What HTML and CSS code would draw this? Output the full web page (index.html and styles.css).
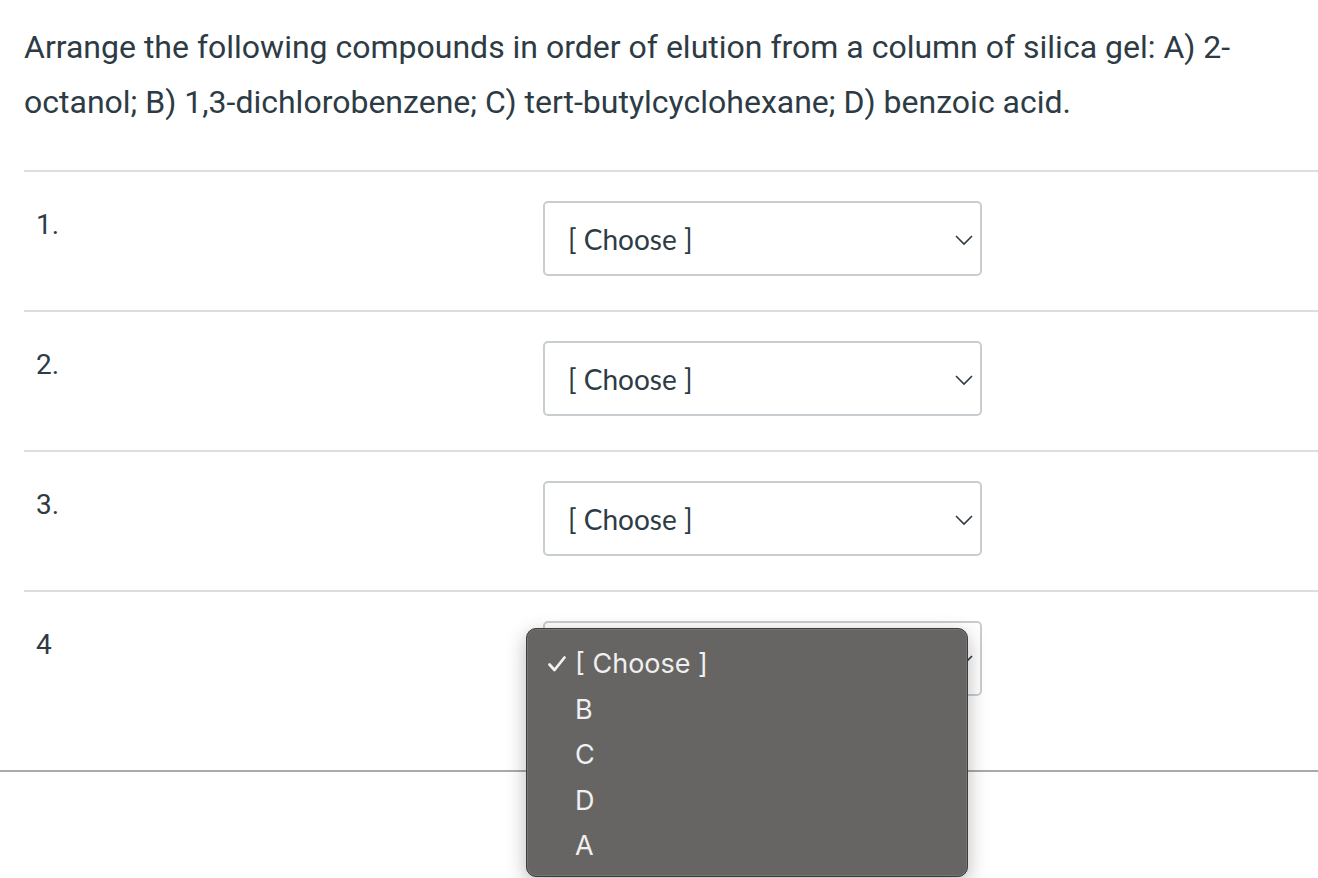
FILE: index.html
```html
<!DOCTYPE html>
<html>
<head>
<meta charset="utf-8">
<link rel="stylesheet" href="styles.css">
</head>
<body>
<div class="question">
  <p class="prompt">Arrange the following compounds in order of elution from a column of silica gel: A) 2-octanol; B) 1,3-dichlorobenzene; C) tert-butylcyclohexane; D) benzoic acid.</p>
</div>
<div class="answers">
  <div class="row">
    <div class="num">1.</div>
    <div class="select-wrap">
      <div class="select"><span>[ Choose ]</span>
        <svg class="chev" width="20" height="12" viewBox="0 0 20 12"><path d="M2 2 L10 10 L18 2" fill="none" stroke="#2d3b45" stroke-width="1.6"/></svg>
      </div>
    </div>
  </div>
  <div class="row">
    <div class="num">2.</div>
    <div class="select-wrap">
      <div class="select"><span>[ Choose ]</span>
        <svg class="chev" width="20" height="12" viewBox="0 0 20 12"><path d="M2 2 L10 10 L18 2" fill="none" stroke="#2d3b45" stroke-width="1.6"/></svg>
      </div>
    </div>
  </div>
  <div class="row">
    <div class="num">3.</div>
    <div class="select-wrap">
      <div class="select"><span>[ Choose ]</span>
        <svg class="chev" width="20" height="12" viewBox="0 0 20 12"><path d="M2 2 L10 10 L18 2" fill="none" stroke="#2d3b45" stroke-width="1.6"/></svg>
      </div>
    </div>
  </div>
  <div class="row last">
    <div class="num">4</div>
    <div class="select-wrap">
      <div class="select"><span>[ Choose ]</span>
        <svg class="chev" width="20" height="12" viewBox="0 0 20 12"><path d="M2 2 L10 10 L18 2" fill="none" stroke="#2d3b45" stroke-width="1.6"/></svg>
      </div>
      <div class="menu">
        <div class="item"><span class="check"><svg width="20" height="18" viewBox="0 0 20 18"><path d="M2.5 9.5 L7.5 15 L17.5 2.5" fill="none" stroke="#f2f2f2" stroke-width="2.8" stroke-linecap="round" stroke-linejoin="round"/></svg></span>[ Choose ]</div>
        <div class="item"><span class="check"></span>B</div>
        <div class="item"><span class="check"></span>C</div>
        <div class="item"><span class="check"></span>D</div>
        <div class="item"><span class="check"></span>A</div>
      </div>
    </div>
  </div>
</div>
<div class="footer-line"></div>
</body>
</html>
```
FILE: styles.css
```css
html, body {
  margin: 0;
  padding: 0;
  background: #ffffff;
}
body {
  font-family: Roboto, "Liberation Sans", sans-serif;
  color: #2d3b45;
  width: 1318px;
  height: 878px;
  overflow: hidden;
}
.question {
  padding: 20px 24px 0 24px;
}
.prompt {
  margin: 0;
  font-size: 32px;
  line-height: 55px;
}
.answers {
  margin: 40px 0 0 24px;
}
.row {
  display: flex;
  border-top: 2px solid #dddddd;
  padding: 29px 0 34px 12px;
}
.row.last {
  padding-bottom: 74px;
}
.num {
  width: 507px;
  flex: none;
  font-size: 28px;
  line-height: 42px;
  padding-top: 3px;
}
.select-wrap {
  position: relative;
}
.select {
  box-sizing: border-box;
  width: 439px;
  height: 75px;
  border: 2px solid #c7cdd1;
  border-radius: 5px;
  display: flex;
  align-items: center;
  justify-content: space-between;
  padding: 0 6px 0 23px;
  font-family: Lato, "Liberation Sans", sans-serif;
  font-size: 28px;
  color: #2d3b45;
}
.chev {
  display: block;
  margin-top: 2px;
}
.menu {
  position: absolute;
  left: -17px;
  top: 7px;
  width: 442px;
  height: 249px;
  box-sizing: border-box;
  background: #666563;
  border: 1px solid #3e3d3c;
  border-radius: 10px;
  box-shadow: 0 6px 20px rgba(0, 0, 0, 0.28), inset 0 0 0 1px #777674;
  padding-top: 12px;
  font-family: Inter, "Liberation Sans", sans-serif;
  font-size: 27px;
  color: #f0f0f0;
}
.item {
  display: flex;
  align-items: center;
  height: 45.5px;
  line-height: 45.5px;
}
.check {
  display: flex;
  align-items: center;
  width: 28px;
  margin-left: 20px;
  flex: none;
}
.footer-line {
  border-top: 2px solid #a9a9a9;
}
```
